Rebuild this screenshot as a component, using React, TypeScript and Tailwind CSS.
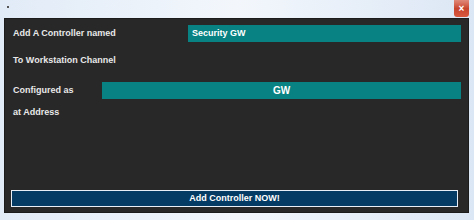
export default function App() {
  const font = { fontFamily: '"Liberation Sans", Arial, sans-serif' };
  return (
    <div
      className="flex h-[220px] w-[474px] flex-col overflow-hidden bg-gradient-to-r from-[#e1ebf7] via-[#f3f7fc] to-[#dce7f5]"
      style={font}
    >
      {/* title bar */}
      <div className="relative flex h-[18px] shrink-0 items-start">
        <div className="ml-[7px] mt-[6px] h-[2px] w-[2px] bg-[#555]" />
        <div className="absolute right-[5px] top-0 flex h-[17px] w-[15px] items-center justify-center rounded-b-[3px] bg-gradient-to-b from-[#e0897a] via-[#c8452d] to-[#d9583e]">
          <span className="text-[10px] font-bold leading-none text-white">×</span>
        </div>
      </div>

      {/* panel */}
      <div className="ml-[4px] mr-[5px] flex h-[195px] flex-col border border-[#1c1c1c] bg-[#282828] pt-[6px] text-[9px] font-bold text-[#e8e8e8]">
        <div className="flex h-[17px] items-center">
          <span className="ml-[8px] w-[175px]">Add A Controller named</span>
          <div className="flex h-[17px] w-[273px] items-center bg-[#088282] pl-[4px] text-white">
            Security GW
          </div>
        </div>

        <div className="mt-[10px] flex h-[18px] items-center pl-[8px]">
          To Workstation Channel
        </div>

        <div className="mt-[12px] flex h-[17px] items-center">
          <span className="ml-[8px] w-[89px]">Configured as</span>
          <div className="flex h-[17px] w-[359px] items-center justify-center bg-[#088282] text-[10px] text-white">
            GW
          </div>
        </div>

        <div className="mt-[5px] flex h-[18px] items-center pl-[8px]">
          at Address
        </div>

        <div className="flex-1" />

        <button className="mb-[5px] ml-[6px] flex h-[17px] w-[447px] items-center justify-center border border-[#e8eef5] bg-[#043b64] text-[9px] font-bold text-white">
          Add Controller NOW!
        </button>
      </div>
    </div>
  );
}
